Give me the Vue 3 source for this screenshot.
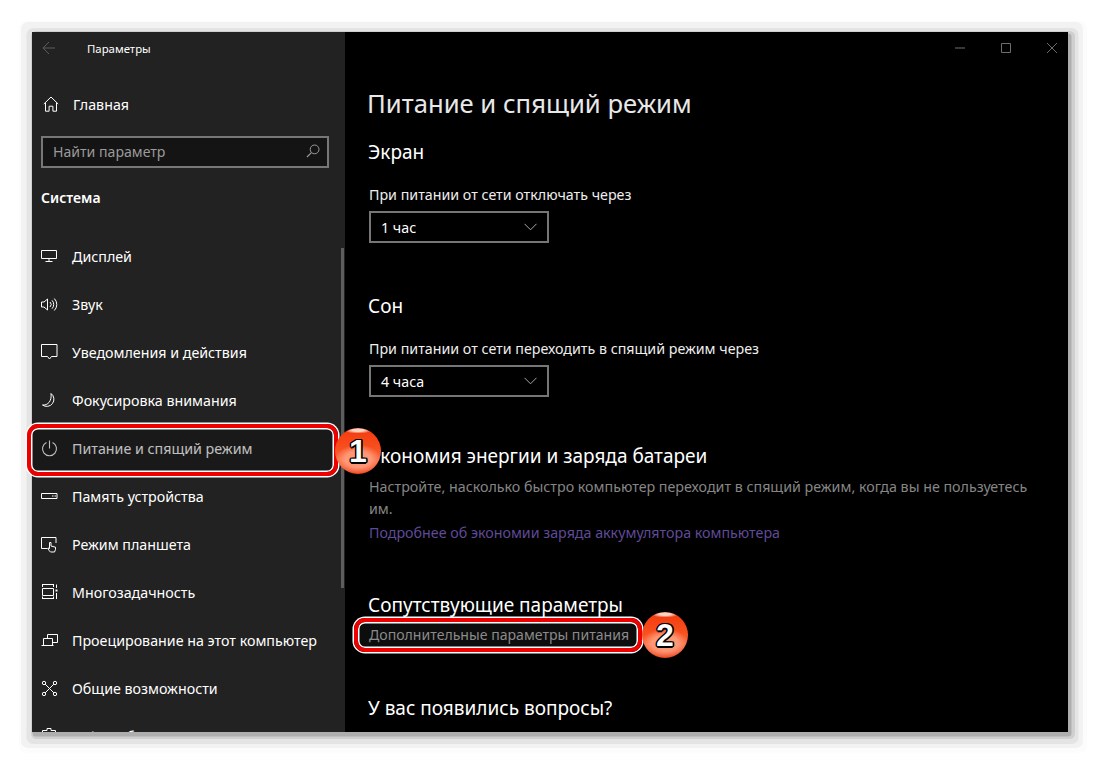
<script setup>
const items = [
  { label: 'Дисплей', icon: 'display' },
  { label: 'Звук', icon: 'sound' },
  { label: 'Уведомления и действия', icon: 'note' },
  { label: 'Фокусировка внимания', icon: 'moon' },
  { label: 'Питание и спящий режим', icon: 'power' },
  { label: 'Память устройства', icon: 'storage' },
  { label: 'Режим планшета', icon: 'tablet' },
  { label: 'Многозадачность', icon: 'multi' },
  { label: 'Проецирование на этот компьютер', icon: 'project' },
  { label: 'Общие возможности', icon: 'shared' },
  { label: 'Буфер обмена', icon: 'puzzle' }
]
</script>

<template>
  <div class="page">
    <div class="window">
      <aside class="side">
        <div class="titlebar">
          <svg class="back" width="14" height="14" viewBox="0 0 14 14"><path d="M13 7H1M7 1 1 7l6 6" fill="none" stroke="#5c5c5c" stroke-width="1"/></svg>
          <span class="apptitle">Параметры</span>
        </div>
        <div class="home">
          <svg class="ico" width="16" height="16" viewBox="0 0 16 16"><path d="M.8 8 8 1l7.2 7M2.500 6.800v8.400h3.600v-5h3.800v5h3.600V6.800" fill="none" stroke="#fff" stroke-width="1"/></svg>
          <span>Главная</span>
        </div>
        <div class="search">
          <span>Найти параметр</span>
          <svg width="14" height="14" viewBox="0 0 14 14"><circle cx="8.600" cy="5.400" r="4.400" fill="none" stroke="#9a9a9a"/><path d="M5.400 8.600 1 13" stroke="#9a9a9a" stroke-width="1.200"/></svg>
        </div>
        <div class="group">Система</div>
        <nav class="nav">
          <div v-for="it in items" :key="it.label" class="item">
            <svg class="ico" width="17" height="17" viewBox="0 0 17 17" fill="none" stroke="#fff" stroke-width="1">
              <template v-if="it.icon === 'display'"><path d="M.5 2.500h15v8H.5zM8 10.500V13M4.500 13.500h7"/></template>
              <template v-else-if="it.icon === 'sound'"><path d="M.5 6h2.500L6.500 3v11L3 11H.5zM9 6a3.500 3.500 0 0 1 0 5M11 4.300a6 6 0 0 1 0 8.400M13.300 2.500a8.500 8.500 0 0 1 0 12"/></template>
              <template v-else-if="it.icon === 'note'"><path d="M.5 .5h15.500v12H10.500l-2 2.500-2-2.500H.5z"/></template>
              <template v-else-if="it.icon === 'moon'"><path d="M10 1.500A7 7 0 1 1 1.500 13C7 13.500 11 9 10 1.500z"/></template>
              <template v-else-if="it.icon === 'power'"><path d="M5.500 2.400A7 7 0 1 0 11.500 2.400M8.500 .5v8" stroke-width="1.100"/></template>
              <template v-else-if="it.icon === 'storage'"><path d="M.5 5.500h15.500v5H.5zM11 8h1.500M13.500 8H15"/></template>
              <template v-else-if="it.icon === 'tablet'"><path d="M6.500 12.500H.5v-11h14.500V7M9.500 16c-1.200-1.200-2.500-2.500-2.500-4l1.500.5V6.500H10V10l4.500 1.200v2.300l-1 2.500z"/></template>
              <template v-else-if="it.icon === 'multi'"><path d="M1 .5h12M1.500 .5V3M12.500 .5V3M1.500 4.500h11v7h-11zM1 14.500h12M1.500 12.500v2M12.500 12.500v2M15.500 .5V4M15.500 9v6"/><path d="M14.500 5.500h2v2h-2z" fill="#fff" stroke="none"/></template>
              <template v-else-if="it.icon === 'project'"><path d="M6.500 6V2.500h10v8h-5M2.500 6.500h9v7h-9zM.5 13.500h12"/></template>
              <template v-else-if="it.icon === 'shared'"><path d="m3.500 3.500 10 10M13.500 3.500l-10 10"/><circle cx="3" cy="3" r="1.700" fill="#222"/><circle cx="14" cy="3" r="1.700" fill="#222"/><circle cx="3" cy="14" r="1.700" fill="#222"/><circle cx="14" cy="14" r="1.700" fill="#222"/></template>
              <template v-else><path d="M1.500 16V2.500h4.500V.5h4v2h4.500V16"/></template>
            </svg>
            <span>{{ it.label }}</span>
          </div>
        </nav>
        <div class="thumb"></div>
      </aside>

      <main class="main">
        <div class="controls">
          <svg width="12" height="12" viewBox="0 0 12 12"><path d="M1 6h10" stroke="#6e6e6e"/></svg>
          <svg width="12" height="12" viewBox="0 0 12 12"><path d="M1.500 1.500h9v9h-9z" fill="none" stroke="#6e6e6e"/></svg>
          <svg width="12" height="12" viewBox="0 0 12 12"><path d="m1 1 10 10M11 1 1 11" stroke="#6e6e6e"/></svg>
        </div>
        <h1>Питание и спящий режим</h1>
        <h2 class="h-screen">Экран</h2>
        <p class="lbl">При питании от сети отключать через</p>
        <div class="select"><span>1 час</span><svg width="13" height="8" viewBox="0 0 13 8"><path d="m.5.800 6 6 6-6" fill="none" stroke="#a8a8a8"/></svg></div>
        <h2 class="h-sleep">Сон</h2>
        <p class="lbl">При питании от сети переходить в спящий режим через</p>
        <div class="select"><span>4 часа</span><svg width="13" height="8" viewBox="0 0 13 8"><path d="m.5.800 6 6 6-6" fill="none" stroke="#a8a8a8"/></svg></div>
        <h2 class="h-eco">Экономия энергии и заряда батареи</h2>
        <p class="desc">Настройте, насколько быстро компьютер переходит в спящий режим, когда вы не пользуетесь им.</p>
        <p class="link">Подробнее об экономии заряда аккумулятора компьютера</p>
        <h2 class="h-rel">Сопутствующие параметры</h2>
        <p class="more">Дополнительные параметры питания</p>
        <h2 class="h-q">У вас появились вопросы?</h2>
      </main>

      <div class="mark mark-a"></div>
      <div class="mark mark-b"></div>
    </div>
    <div class="badge badge-a"><span>1</span></div>
    <div class="badge badge-b"><span>2</span></div>
  </div>
</template>

<style>
html, body { margin: 0; background: #fff; }
</style>

<style scoped>
.page {
  position: relative;
  isolation: isolate;
  width: 1100px;
  height: 764px;
  padding: 32px;
  box-sizing: border-box;
  overflow: hidden;
  background: #fff;
  font-family: "Noto Sans", "Open Sans", sans-serif;
}
.window {
  position: relative;
  display: flex;
  width: 1036px;
  height: 700px;
  background: #000;
}
.window::before {
  content: "";
  position: absolute;
  inset: 0;
  z-index: -1;
  border-radius: 2px;
  box-shadow:
    2px 3px 0 1.500px #aeaeae,
    3px 3px 0 4px #cfcfcf,
    2.500px 4px 0 8px #e4e4e4,
    2px 3px 0 13px #f2f2f2,
    3px 5px 0 16px #fcfcfc;
}
.side {
  position: relative;
  flex: none;
  width: 313px;
  background: #222;
  color: #fff;
  overflow: hidden;
}
.titlebar {
  display: flex;
  align-items: center;
  height: 32px;
  padding-left: 10px;
}
.back { margin-top: -1px; }
.apptitle {
  margin-left: 31px;
  font-size: 11.400px;
  margin-top: 1px;
}
.home {
  display: flex;
  align-items: center;
  height: 48px;
  margin-top: 16px;
  padding-left: 11px;
  font-size: 14.250px;
}
.home .ico { margin-right: 14px; }
.search {
  display: flex;
  align-items: center;
  justify-content: space-between;
  box-sizing: border-box;
  width: 288px;
  height: 32px;
  margin: 8px 0 0 9px;
  padding: 0 7px 2px 10px;
  border: 2px solid #777;
  background: #141414;
  color: #9b9b9b;
  font-size: 14.100px;
}
.group {
  margin: 19px 0 0 9px;
  height: 22px;
  line-height: 22px;
  font-size: 14px;
  font-weight: 600;
}
.nav { margin-top: 23px; }
.item {
  display: flex;
  align-items: center;
  height: 48px;
  padding-left: 9px;
  font-size: 14.250px;
}
.item .ico { flex: none; margin-right: 14px; }
.thumb {
  position: absolute;
  left: 309px;
  top: 216px;
  width: 3px;
  height: 340px;
  background: #5d5d5d;
}
.main {
  position: relative;
  flex: 1;
  padding-left: 23px;
  color: #fff;
}
.controls {
  position: absolute;
  right: 10px;
  top: 10px;
  display: flex;
  gap: 34px;
}
h1 {
  margin: 53px 0 0 -1px;
  height: 38px;
  line-height: 38px;
  font-size: 25.650px;
  font-weight: 400;
  color: #e8e8e8;
}
h2 {
  margin: 0;
  height: 28px;
  line-height: 28px;
  font-size: 19px;
  font-weight: 400;
}
.h-screen { margin-top: 15px; }
.lbl {
  margin: 18px 0 0 1px;
  height: 22px;
  line-height: 22px;
  font-size: 14.250px;
  color: #eee;
}
.select {
  display: flex;
  align-items: center;
  justify-content: space-between;
  box-sizing: border-box;
  width: 180px;
  height: 32px;
  margin: 5px 0 0 1px;
  padding: 0 10px 0 10px;
  border: 2px solid #767676;
  font-size: 14.250px;
}
.h-sleep { margin-top: 49px; }
.h-eco { margin-top: 45px; }
.desc {
  margin: 6px 0 0 1px;
  width: 672px;
  line-height: 22px;
  font-size: 14.250px;
  color: #868686;
}
.link {
  margin: 2px 0 0 1px;
  height: 22px;
  line-height: 22px;
  font-size: 14.250px;
  color: #5f4a96;
}
.h-rel { margin-top: 47px; }
.more {
  margin: 5px 0 0 1px;
  height: 22px;
  line-height: 22px;
  font-size: 14.100px;
  color: #858585;
}
.h-q { margin-top: 48px; }
.mark {
  position: absolute;
  box-sizing: border-box;
  border: 4px solid #ec0000;
  border-radius: 11px;
  box-shadow: 0 0 0 1.500px #fff, inset 0 0 0 1.500px #fff;
}
.mark-a { left: -5px; top: 392px; width: 311px; height: 52px; background: rgba(0, 0, 0, .25); }
.mark-b { left: 322px; top: 586px; width: 288px; height: 34px; background: rgba(255, 255, 255, .05); }
.badge {
  position: absolute;
  width: 46px;
  height: 46px;
  border-radius: 50%;
  display: flex;
  align-items: center;
  justify-content: center;
  background:
    radial-gradient(ellipse 30% 7% at 50% 5%, #ffd2c2 0 40%, transparent 100%),
    radial-gradient(ellipse 50% 32% at 50% 68%, rgba(255, 170, 140, .75) 0 55%, transparent 100%),
    linear-gradient(180deg, #f3390c 0, #f8501f 45%, #fb6a42 70%, #ee431a 100%);
}
.badge span {
  color: #fff;
  font: 700 32px/46px "Liberation Sans", sans-serif;
  text-shadow: -1.500px 0 0 #000, 1.500px 0 0 #000, 0 -1.500px 0 #000, 0 1.500px 0 #000, -1.200px -1.200px 0 #000, 1.200px -1.200px 0 #000, -1.200px 1.200px 0 #000, 1.200px 1.200px 0 #000;
}
.badge-a { left: 335px; top: 428px; }
.badge-b { left: 642px; top: 612px; }
</style>
